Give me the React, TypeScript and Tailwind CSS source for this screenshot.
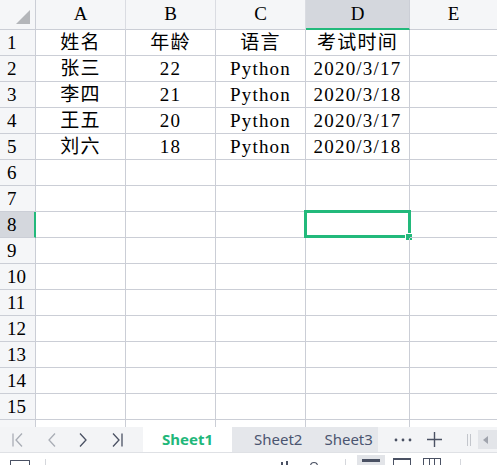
import React from 'react';

const cellFont = { fontFamily: '"Liberation Serif", "Noto Sans CJK SC", serif' };

const columns = ['A', 'B', 'C', 'D', 'E'];

const rows: string[][] = [
  ['姓名', '年龄', '语言', '考试时间'],
  ['张三', '22', 'Python', '2020/3/17'],
  ['李四', '21', 'Python', '2020/3/18'],
  ['王五', '20', 'Python', '2020/3/17'],
  ['刘六', '18', 'Python', '2020/3/18'],
];

function Chevron({ dir, bar, color }: { dir: 'l' | 'r'; bar?: boolean; color: string }) {
  return (
    <svg width="14" height="16" viewBox="0 0 14 16" fill="none" stroke={color} strokeWidth="1.3">
      {dir === 'l' ? (
        <>
          {bar && <path d="M2 1.5v13" />}
          <path d="M11 1.5L5 8l6 6.5" />
        </>
      ) : (
        <>
          <path d="M3 1.5L9 8l-6 6.5" />
          {bar && <path d="M12 1.5v13" />}
        </>
      )}
    </svg>
  );
}

export default function App() {
  const total = 15;
  return (
    <div className="w-[497px] h-[465px] overflow-hidden bg-white select-none" style={cellFont}>
      <div className="h-[427px] overflow-hidden">
        <div className="grid grid-cols-[36px_90px_90px_90px_104px_1fr] text-[19px] text-black">
          {/* header row */}
          <div className="h-[30px] bg-[#f5f6f8] border-r border-b border-[#cbced6] flex items-end justify-end pr-[5px] pb-[5px]">
            <svg width="14" height="14" viewBox="0 0 14 14">
              <path d="M14 0V14H0Z" fill="#b4b6ba" />
            </svg>
          </div>
          {columns.map((c) => (
            <div
              key={c}
              className={
                c === 'D'
                  ? 'h-[30px] bg-[#d4d7dd] border-r border-b-2 border-r-[#cbced6] border-b-[#22b97b] flex items-center justify-center pt-[1px]'
                  : c === 'E'
                  ? 'h-[30px] bg-[#f5f6f8] border-b border-[#cbced6] flex items-center justify-center'
                  : 'h-[30px] bg-[#f5f6f8] border-r border-b border-[#dadce2] border-b-[#cbced6] flex items-center justify-center'
              }
            >
              {c}
            </div>
          ))}

          {Array.from({ length: total + 1 }).map((_, i) => {
            const r = i + 1;
            const data = rows[i];
            const sel = r === 8;
            return (
              <React.Fragment key={r}>
                <div
                  className={
                    sel
                      ? 'h-[26px] bg-[#d4d7dd] border-b border-[#cbced6] border-r-2 border-r-[#22b97b] flex items-center pl-[7px] pt-[1px]'
                      : 'h-[26px] bg-[#f5f6f8] border-r border-b border-[#cbced6] flex items-center pl-[7px] pt-[1px]'
                  }
                >
                  {r <= total ? r : ''}
                </div>
                {columns.map((c, ci) => (
                  <div
                    key={c}
                    className={
                      (ci === 4 ? 'border-b ' : 'border-r border-b ') +
                      'relative h-[26px] border-[#cbced6] flex items-center justify-center pt-[1px] whitespace-nowrap tracking-[1.2px]'
                    }
                  >
                    {data && ci < 4 ? data[ci] : ''}
                    {sel && c === 'D' && (
                      <>
                        <div className="absolute -left-[2px] -top-[2px] w-[107px] h-[28px] border-[3px] border-[#22b97b]" />
                        <div className="absolute right-[-4px] bottom-[-4px] w-[8px] h-[8px] bg-white flex items-center justify-center">
                          <div className="w-[6px] h-[6px] bg-[#22b97b]" />
                        </div>
                      </>
                    )}
                  </div>
                ))}
              </React.Fragment>
            );
          })}
        </div>
      </div>

      {/* sheet tab bar */}
      <div
        className="h-[26px] bg-[#f3f4f6] border-b border-[#dfe1e5] flex items-stretch"
        style={{ fontFamily: '"Noto Sans", "Liberation Sans", sans-serif' }}
      >
        <div className="w-[143px] flex items-center pl-[11px] gap-[19px]">
          <Chevron dir="l" bar color="#a9adb5" />
          <Chevron dir="l" color="#a9adb5" />
          <Chevron dir="r" color="#4a5163" />
          <Chevron dir="r" bar color="#4a5163" />
        </div>
        <div className="w-[89px] bg-white flex items-center justify-center text-[15px] font-bold text-[#21b77a]">
          Sheet1
        </div>
        <div className="w-[146px] bg-[#e5e7eb] flex items-center text-[15px] text-[#4b5570]">
          <span className="pl-[22px]">Sheet2</span>
          <span className="pl-[22px]">Sheet3</span>
        </div>
        <div className="flex items-center pl-[16px]">
          <svg width="18" height="4" viewBox="0 0 18 4" fill="#4a5163">
            <circle cx="2" cy="2" r="1.4" />
            <circle cx="9" cy="2" r="1.4" />
            <circle cx="16" cy="2" r="1.4" />
          </svg>
        </div>
        <div className="flex items-center pl-[14px]">
          <svg width="17" height="17" viewBox="0 0 17 17" stroke="#4a5163" strokeWidth="1.4">
            <path d="M8.5 1v15M1 8.5h15" />
          </svg>
        </div>
        <div className="flex items-center pl-[23px]">
          <svg width="6" height="14" viewBox="0 0 6 14" stroke="#c3c6cc" strokeWidth="1">
            <path d="M1.5 1v12M4.5 1v12" />
          </svg>
        </div>
        <div className="ml-[6px] my-[3px] flex-1 bg-[#e3e5e9] flex items-center pl-[5px]">
          <svg width="5" height="8" viewBox="0 0 5 8" fill="#a0a4ad">
            <path d="M5 0v8L0 4z" />
          </svg>
        </div>
      </div>

      {/* status bar (cut off) */}
      <div className="h-[12px] bg-white relative flex items-start">
        <div className="ml-[10px] mt-[7px] w-[20px] h-[8px] border-t-[1.5px] border-x-[1.5px] border-[#4a5163] rounded-t-[1px]" />
        <div className="ml-[15px] mt-[6px] w-px h-[8px] bg-[#d5d7dc]" />
        <div className="ml-[235px] mt-[8px] flex gap-[3px] items-end">
          <div className="w-[2px] h-[4px] bg-[#4a5163]" />
          <div className="w-[2px] h-[5px] bg-[#4a5163]" />
          <div className="w-[6px] h-[1.5px] bg-[#4a5163]" />
          <div className="ml-[10px] w-[8px] h-[4px] border-t border-x border-[#4a5163] rounded-t-full" />
        </div>
        <div className="ml-[27px] mt-[6px] w-px h-[8px] bg-[#d5d7dc]" />
        <div className="ml-[11px] mt-[2px] w-[28px] h-[10px] bg-[#e2e4e8] flex justify-center pt-[4px]">
          <div className="w-[18px] h-[3px] bg-[#4a5163]" />
        </div>
        <div className="ml-[8px] mt-[5px] w-[18px] h-[8px] border-t-2 border-x border-[#4a5163]" />
        <div className="ml-[12px] mt-[5px] w-[18px] h-[8px] border-t border-x border-[#4a5163] flex justify-evenly">
          <div className="w-px h-full bg-[#4a5163]" />
          <div className="w-px h-full bg-[#4a5163]" />
        </div>
        <div className="ml-[19px] mt-[6px] w-px h-[8px] bg-[#d5d7dc]" />
      </div>
    </div>
  );
}
